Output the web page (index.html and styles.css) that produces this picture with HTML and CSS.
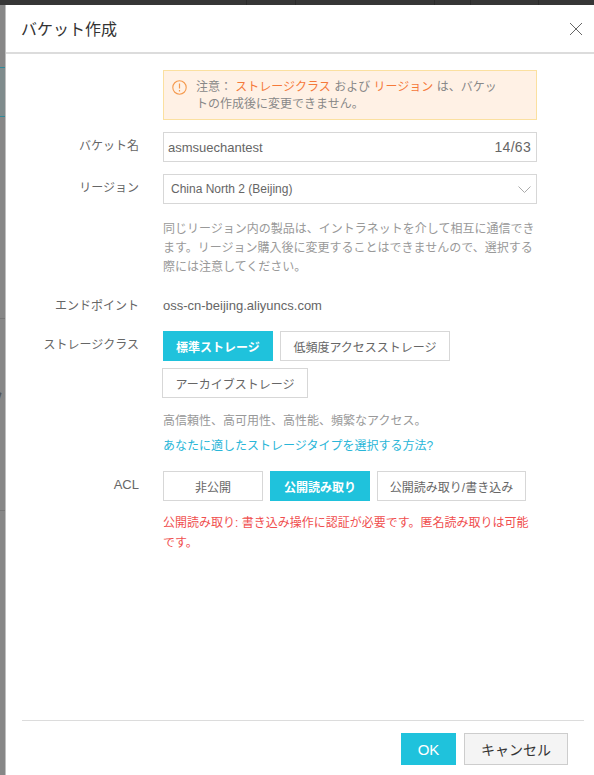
FILE: index.html
```html
<!DOCTYPE html>
<html lang="ja">
<head>
<meta charset="utf-8">
<title>バケット作成</title>
<link rel="stylesheet" href="styles.css">
</head>
<body>
<div class="topbar"><i class="cell"></i><i class="cell"></i><i class="cell"></i><i class="cell"></i><i class="cell"></i><i></i></div>
<div class="stage">
  <div class="backdrop">
    <div class="bd-block"><span class="bd-text">功</span></div>
    <div class="bd-rule first"></div>
    <div class="bd-glyph">ラ</div>
    <div class="bd-rule second"></div>
  </div>
  <div class="modal">
    <header class="head">
      <h1 class="title">バケット作成</h1>
      <svg class="close" width="14" height="14" viewBox="0 0 14 14"><path d="M1 1l12 12M13 1L1 13" fill="none" stroke="#666" stroke-width="1"/></svg>
    </header>
    <div class="body">
      <div class="row notice-row">
        <div class="label"></div>
        <div class="field">
          <div class="notice">
            <svg class="warn" width="15" height="15" viewBox="0 0 15 15"><circle cx="7.5" cy="7.5" r="6.7" fill="none" stroke="#f59a4f" stroke-width="1.1"/><path d="M7.5 3.6v5M7.5 10v1.4" fill="none" stroke="#f59a4f" stroke-width="1.2"/></svg>
            <div class="notice-text">
              <p class="notice-line">注意： <span class="hl">ストレージクラス</span> および <span class="hl">リージョン</span> は、バケッ</p>
              <p class="notice-line">トの作成後に変更できません。</p>
            </div>
          </div>
        </div>
      </div>
      <div class="row name-row">
        <div class="label">バケット名</div>
        <div class="field">
          <div class="input"><span>asmsuechantest</span><span class="count">14/63</span></div>
        </div>
      </div>
      <div class="row region-row">
        <div class="label">リージョン</div>
        <div class="field">
          <div class="input select"><span>China North 2 (Beijing)</span>
            <svg width="13" height="7" viewBox="0 0 13 7"><path d="M.5.5l6 6 6-6" fill="none" stroke="#aaa" stroke-width="1"/></svg>
          </div>
          <p class="help">同じリージョン内の製品は、イントラネットを介して相互に通信できます。リージョン購入後に変更することはできませんので、選択する際には注意してください。</p>
        </div>
      </div>
      <div class="row end-row">
        <div class="label">エンドポイント</div>
        <div class="field plain">oss-cn-beijing.aliyuncs.com</div>
      </div>
      <div class="row class-row">
        <div class="label">ストレージクラス</div>
        <div class="field">
          <div class="opts">
            <span class="opt on w-std">標準ストレージ</span>
            <span class="opt w-low">低頻度アクセスストレージ</span>
            <span class="opt w-arc">アーカイブストレージ</span>
          </div>
          <p class="help tight">高信頼性、高可用性、高性能、頻繁なアクセス。</p>
          <a class="link">あなたに適したストレージタイプを選択する方法?</a>
        </div>
      </div>
      <div class="row acl-row">
        <div class="label">ACL</div>
        <div class="field">
          <div class="opts acl">
            <span class="opt w-acl">非公開</span>
            <span class="opt on w-acl">公開読み取り</span>
            <span class="opt w-rw">公開読み取り/書き込み</span>
          </div>
          <p class="error">公開読み取り: 書き込み操作に認証が必要です。匿名読み取りは可能です。</p>
        </div>
      </div>
    </div>
    <footer class="foot">
      <button class="btn ok">OK</button>
      <button class="btn cancel">キャンセル</button>
    </footer>
  </div>
</div>
</body>
</html>
```
FILE: styles.css
```css
* { box-sizing: border-box; }
html, body { margin: 0; height: 100%; overflow: hidden; }
body {
  font-family: "Liberation Sans", "Noto Sans CJK JP", sans-serif;
  font-size: 12px;
  color: #666;
  background: #fff;
  display: flex;
  flex-direction: column;
}
.topbar {
  height: 5px;
  background: #363636;
  flex: none;
  display: grid;
  grid-template-columns: 247px 49px 139px 36px 68px 1fr;
}
.cell { border-right: 1px solid #2b2b2b; }
.stage { flex: 1; display: flex; min-height: 0; }
.backdrop {
  width: 6px;
  flex: none;
  background: #878787;
  border-right: 1px solid #c0c0c0;
  overflow: hidden;
  display: flex;
  flex-direction: column;
}
.bd-block {
  height: 50px;
  margin-top: 62px;
  flex: none;
  background: #7f8b8c;
  border-top: 1px solid #2f8a9a;
  border-bottom: 1px solid #2f8a9a;
  color: #5a5f60;
  line-height: 30px;
  text-indent: -7px;
  white-space: nowrap;
}
.bd-text { display: inline-block; }
.bd-rule { height: 1px; flex: none; background: #777; }
.bd-rule.first { margin-top: 201px; }
.bd-rule.second { margin-top: 91px; }
.bd-glyph {
  height: 40px;
  margin-top: 60px;
  flex: none;
  font-size: 36px;
  line-height: 40px;
  color: #555;
  text-indent: -30px;
  white-space: nowrap;
}
.modal { flex: 1; display: flex; flex-direction: column; background: #fff; min-width: 0; }
.head {
  height: 49px;
  flex: none;
  display: flex;
  align-items: center;
  justify-content: space-between;
  padding: 0 11px 0 15px;
  border-bottom: 2px solid #dcdcdc;
}
.title { margin: 0 0 2px; font-size: 16px; font-weight: 400; color: #333; }
.body { flex: 1; padding-top: 16px; min-height: 0; }
.row { display: flex; }
.label {
  width: 133px;
  flex: none;
  text-align: right;
  color: #666;
  line-height: 20px;
}
.field { width: 374px; margin-left: 24px; flex: none; }
.notice {
  height: 50px;
  display: flex;
  background: #fff1e5;
  border: 1px solid #fbe0a0;
  padding: 8px 8px 0 8px;
}
.warn { flex: none; margin: 1px 9px 0 0; }
.notice-text { line-height: 16.5px; color: #888; }
.notice-line { margin: 0; white-space: nowrap; }
.hl { color: #f5793a; }
.name-row { margin-top: 12px; }
.name-row .label, .region-row .label { padding-top: 4px; }
.input {
  height: 30px;
  border: 1px solid #d7d7d7;
  display: flex;
  align-items: center;
  justify-content: space-between;
  padding: 0 5px 0 4px;
  font-size: 13px;
  color: #666;
}
.count { font-size: 14px; letter-spacing: .3px; }
.region-row { margin-top: 12px; }
.select { padding: 0 5px 0 7px; font-size: 12px; }
.help { margin: 16px 0 0; line-height: 19px; color: #999; }
.end-row { margin-top: 19px; }
.plain { font-size: 13px; line-height: 20px; color: #666; }
.class-row { margin-top: 15px; }
.class-row .label { padding-top: 4px; }
.opts { display: flex; flex-wrap: wrap; gap: 7px; }
.opt {
  height: 30px;
  display: flex;
  align-items: center;
  justify-content: center;
  border: 1px solid #d7d7d7;
  color: #666;
  background: #fff;
}
.opt.on { background: #1fc2dc; border-color: #1fc2dc; color: #fff; font-weight: 700; }
.w-std { width: 110px; }
.w-low { width: 170px; }
.w-arc { width: 146px; margin-left: -1px; }
.w-acl { width: 100px; }
.w-rw { width: 149px; }
.tight { margin-top: 13px; line-height: 20px; }
.link { display: block; margin-top: 5px; line-height: 20px; color: #29b6d8; }
.acl-row { margin-top: 15px; }
.acl-row .label { font-size: 13px; padding-top: 4px; }
.acl { flex-wrap: nowrap; }
.error { margin: 12px 0 0; line-height: 20px; color: #f04e4e; }
.foot {
  flex: none;
  height: 55px;
  margin: 0 10px 0 16px;
  border-top: 1px solid #dcdcdc;
  display: flex;
  justify-content: flex-end;
  gap: 8px;
  padding: 12px 16px 0 0;
}
.btn {
  height: 32px;
  font: inherit;
  font-size: 14px;
  padding: 0;
  border-radius: 0;
}
.ok { width: 55px; background: #1fc2dc; border: 0; color: #fff; font-size: 15px; }
.cancel { width: 104px; background: #f4f4f4; border: 1px solid #cdcdcd; color: #333; }
```
